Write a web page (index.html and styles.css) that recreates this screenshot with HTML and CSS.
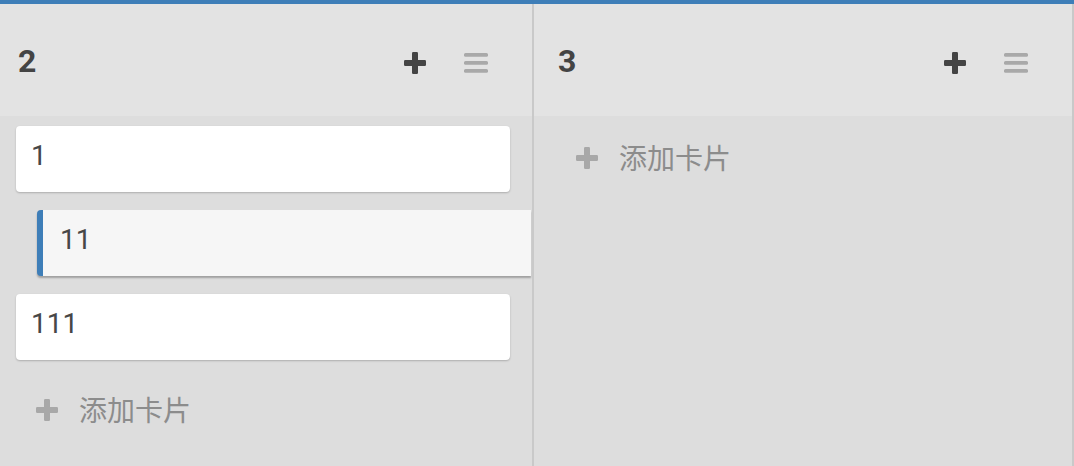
FILE: index.html
```html
<!DOCTYPE html>
<html lang="zh">
<head>
<meta charset="utf-8">
<title>Board</title>
<link rel="stylesheet" href="styles.css">
</head>
<body>
<div class="topbar"></div>
<div class="board">
  <section class="column">
    <header class="col-head">
      <h2 class="col-title">2</h2>
      <button class="icon-btn plus" aria-label="add">
        <svg width="22" height="22" viewBox="0 0 22 22"><rect x="8" y="0" width="6" height="22" rx="1.2"/><rect x="0" y="8" width="22" height="6" rx="1.2"/></svg>
      </button>
      <button class="icon-btn menu" aria-label="menu">
        <svg width="24" height="20" viewBox="0 0 24 20"><rect x="0" y="0" width="24" height="3.7" rx="1.5"/><rect x="0" y="8" width="24" height="3.7" rx="1.5"/><rect x="0" y="16" width="24" height="3.7" rx="1.5"/></svg>
      </button>
    </header>
    <div class="col-body">
      <div class="card">1</div>
      <div class="card dragging">11</div>
      <div class="card">111</div>
      <div class="add-card">
        <svg width="22" height="22" viewBox="0 0 22 22"><rect x="8" y="0" width="6" height="22" rx="1.2"/><rect x="0" y="8" width="22" height="6" rx="1.2"/></svg>
        <span>添加卡片</span>
      </div>
    </div>
  </section>
  <section class="column">
    <header class="col-head">
      <h2 class="col-title">3</h2>
      <button class="icon-btn plus" aria-label="add">
        <svg width="22" height="22" viewBox="0 0 22 22"><rect x="8" y="0" width="6" height="22" rx="1.2"/><rect x="0" y="8" width="22" height="6" rx="1.2"/></svg>
      </button>
      <button class="icon-btn menu" aria-label="menu">
        <svg width="24" height="20" viewBox="0 0 24 20"><rect x="0" y="0" width="24" height="3.7" rx="1.5"/><rect x="0" y="8" width="24" height="3.7" rx="1.5"/><rect x="0" y="16" width="24" height="3.7" rx="1.5"/></svg>
      </button>
    </header>
    <div class="col-body">
      <div class="add-card">
        <svg width="22" height="22" viewBox="0 0 22 22"><rect x="8" y="0" width="6" height="22" rx="1.2"/><rect x="0" y="8" width="22" height="6" rx="1.2"/></svg>
        <span>添加卡片</span>
      </div>
    </div>
  </section>
</div>
</body>
</html>
```
FILE: styles.css
```css
html, body {
  margin: 0;
  padding: 0;
  height: 100%;
  overflow: hidden;
  background: #dddddd;
  font-family: Roboto, "Noto Sans CJK SC", sans-serif;
}
.topbar {
  height: 4px;
  background: #3e7eb8;
}
.board {
  display: flex;
  margin-left: -6px;
  height: calc(100% - 4px);
}
.column {
  flex: 0 0 538px;
  width: 538px;
  border-right: 2px solid #c9c9c9;
  display: flex;
  flex-direction: column;
  background: #dddddd;
  overflow: hidden;
}
.col-head {
  height: 112px;
  flex: 0 0 112px;
  display: flex;
  align-items: center;
  padding: 0 44px 0 24px;
  background: #e3e3e3;
  box-sizing: border-box;
}
.col-title {
  flex: 1;
  margin: 0;
  font-family: Roboto, sans-serif;
  font-size: 32px;
  font-weight: 700;
  color: #444444;
  line-height: 1;
  margin-top: 2px;
}
.icon-btn {
  border: 0;
  padding: 0;
  background: none;
  display: flex;
  margin-top: 6px;
}
.icon-btn.plus svg { fill: #444444; }
.icon-btn.menu { margin-left: 38px; }
.icon-btn.menu svg { fill: #a9a9a9; }
.col-body {
  flex: 1;
  padding: 10px 22px 0;
}
.card {
  height: 66px;
  box-sizing: border-box;
  background: #ffffff;
  border-radius: 4px;
  box-shadow: 0 1px 2px rgba(0, 0, 0, 0.22);
  margin-bottom: 18px;
  padding: 0 15px 7px;
  display: flex;
  align-items: center;
  font-family: Roboto, sans-serif;
  font-size: 28px;
  color: #474747;
}
.card.dragging {
  background: #f6f6f6;
  border-left: 6px solid #3e7eb8;
  border-radius: 4px 0 0 4px;
  padding-left: 17px;
  transform: translateX(21px);
  box-shadow: 0 2px 2px rgba(0, 0, 0, 0.28);
}
.add-card {
  height: 64px;
  display: flex;
  align-items: center;
  padding-left: 20px;
}
.add-card svg {
  fill: #a8a8a8;
  flex: 0 0 22px;
}
.add-card span {
  margin-left: 21px;
  font-family: "Noto Sans CJK SC", sans-serif;
  font-size: 28px;
  color: #8c8c8c;
  line-height: 1;
  margin-top: -2px;
}
```
